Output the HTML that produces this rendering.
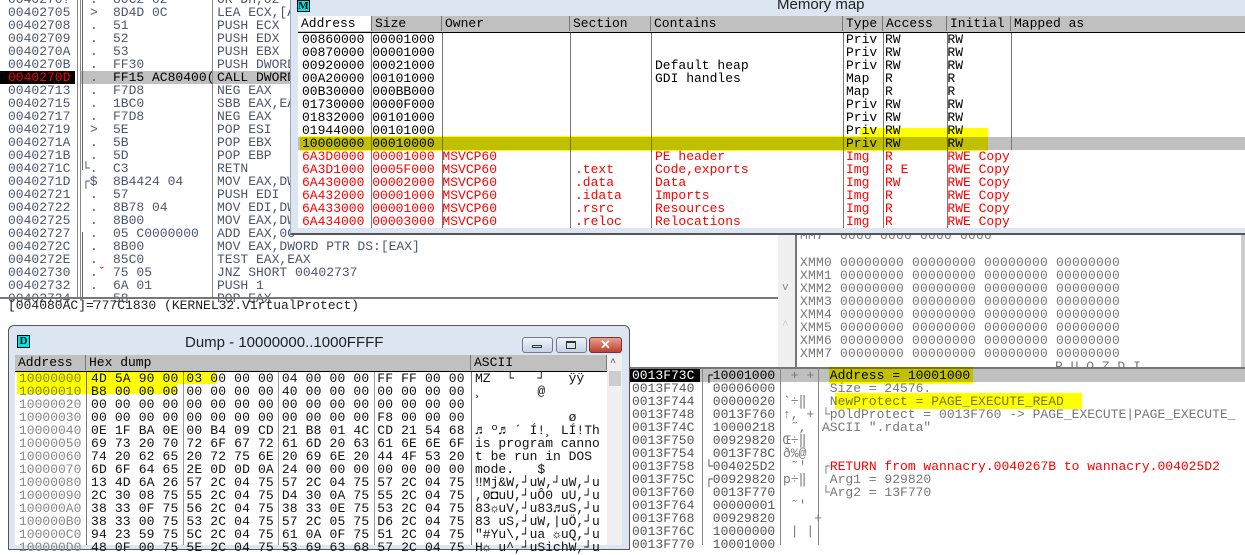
<!DOCTYPE html>
<html><head><meta charset="utf-8"><style>
*{margin:0;padding:0;box-sizing:border-box}
body{width:1245px;height:545px;overflow:hidden;background:#fff;position:relative;font-family:"Liberation Mono","DejaVu Sans Mono",monospace;font-size:13px;line-height:13px}
.a{position:absolute;white-space:pre}
.l{position:absolute;background:#555}
.dis{color:#4a5670}
.red{color:#f00}
.hl{position:absolute;background:#ffff00;mix-blend-mode:multiply}
.title{font-family:"Liberation Sans",sans-serif;font-size:15px;color:#222}
.hdr{position:absolute;background:#c0c0c0;border-bottom:1px solid #000}
.hc{position:absolute;top:0;height:15px;line-height:15px;padding-left:3px;border-right:1px solid #777;color:#000;white-space:pre}
</style></head><body>

<div class="a" style="left:80px;top:71px;width:215px;height:13px;background:#c0c0c0"></div>
<div class="a dis" style="left:8px;top:-7px;line-height:13px">0040270?
00402705
00402708
00402709
0040270A
0040270B
<span style="background:#000;color:#f00;display:inline-block;margin-left:-8px;padding-left:8px;width:75px">0040270D</span>
00402713
00402715
00402717
00402719
0040271A
0040271B
0040271C
0040271D
00402721
00402722
00402725
00402727
0040272C
0040272E
00402730
00402732
00402734</div>
<div class="l" style="left:77px;top:0;width:1px;height:297px;background:#888"></div>
<div class="l" style="left:80px;top:0;width:1px;height:297px;background:#888"></div>
<div class="l" style="left:212px;top:0;width:1px;height:297px;background:#888"></div>
<div class="l" style="left:82px;top:0;width:1px;height:170px;background:#666"></div>
<div class="l" style="left:82px;top:232px;width:1px;height:65px;background:#666"></div>
<div class="a dis" style="left:90px;top:-7px">.
&gt;
.
.
.
.
.
.
.
.
&gt;
.
.
<span style="margin-left:-8px">└.</span>
<span style="margin-left:-8px">┌$</span>
.
.
.
.
.
.
.<span class="red">ˇ</span>
.
.</div>
<div class="a dis" style="left:113px;top:-7px">80C2 02
8D4D 0C
51
52
53
FF30
<span style="color:#000">FF15 AC80400(</span>
F7D8
1BC0
F7D8
5E
5B
5D
C3
8B4424 04
57
8B78 04
8B00
05 C0000000
8B00
85C0
75 05
6A 01
58</div>
<div class="a dis" style="left:217px;top:-7px">OR DH,02
LEA ECX,[A
PUSH ECX
PUSH EDX
PUSH EBX
PUSH DWORD
<span style="color:#000">CALL DWORD</span>
NEG EAX
SBB EAX,EA
NEG EAX
POP ESI
POP EBX
POP EBP
RETN
MOV EAX,DW
PUSH EDI
MOV EDI,DW
MOV EAX,DW
ADD EAX,0C
MOV EAX,DWORD PTR DS:[EAX]
TEST EAX,EAX
JNZ SHORT 00402737
PUSH 1
POP EAX</div>
<div class="l" style="left:0;top:297px;width:795px;height:2px;background:#777"></div>
<div class="a" style="left:8px;top:299px;color:#222">[004080AC]=777C1830 (KERNEL32.VirtualProtect)</div>
<div class="l" style="left:778px;top:235px;width:17px;height:133px;background:#f0f0f0"></div>
<div class="a" style="left:782px;top:282px;color:#888;font-size:11px">v</div>
<div class="a" style="left:782px;top:320px;color:#ccc;font-size:11px">^</div>

<div class="l" style="left:795px;top:235px;width:2px;height:133px;background:#777"></div>
<div class="a" style="left:800px;top:229px;color:#777;letter-spacing:0.2px">MM7  0000 0000 0000 0000</div>
<div class="a" style="left:800px;top:256px;color:#777;letter-spacing:0.2px">XMM0 00000000 00000000 00000000 00000000
XMM1 00000000 00000000 00000000 00000000
XMM2 00000000 00000000 00000000 00000000
XMM3 00000000 00000000 00000000 00000000
XMM4 00000000 00000000 00000000 00000000
XMM5 00000000 00000000 00000000 00000000
XMM6 00000000 00000000 00000000 00000000
XMM7 00000000 00000000 00000000 00000000</div>
<div class="a" style="left:1055px;top:360px;color:#777">P U O Z D I</div>
<div class="l" style="left:1241px;top:235px;width:4px;height:133px;background:#ccc"></div>

<div class="l" style="left:630px;top:367px;width:615px;height:2px;background:#777"></div>
<div class="a" style="left:630px;top:369px;width:615px;height:13px;background:#c0c0c0"></div>
<div class="a" style="left:630px;top:369px;width:70px;height:13px;background:#000"></div>
<div class="l" style="left:702px;top:369px;width:1px;height:176px;background:#888"></div>
<div class="l" style="left:780px;top:369px;width:1px;height:176px;background:#888"></div>
<div class="l" style="left:818px;top:369px;width:1px;height:176px;background:#888"></div>
<div class="a" style="left:632px;top:369px;color:#555"><span style="color:#fff">0013F73C</span>
0013F740
0013F744
0013F748
0013F74C
0013F750
0013F754
0013F758
0013F75C
0013F760
0013F764
0013F768
0013F76C
0013F770</div>
<div class="a" style="left:705px;top:369px;color:#555"><span style="color:#000">┌10001000</span>
 00006000
 00000020
 0013F760
 10000218
 00929820
 0013F78C
└004025D2
┌00929820
 0013F770
 00000001
 00929820
 10000000
 10001000</div>
<div class="a" style="left:783px;top:369px;color:#777"> + +
 
`÷‖
↑, +
 ˜,
Œ÷‖
ð%@
 ˜'
p÷‖
 
 ˜'
    +
 | |</div>
<div class="a" style="left:822px;top:369px;color:#777"><span style="color:#000"> Address = 10001000</span>
 Size = 24576.
 NewProtect = PAGE_EXECUTE_READ
└pOldProtect = 0013F760 -> PAGE_EXECUTE|PAGE_EXECUTE_
ASCII ".rdata"
 
 
┌<span class="red">RETURN from wannacry.0040267B to wannacry.004025D2</span>
 Arg1 = 929820
└Arg2 = 13F770</div>
<div class="hl" style="left:829px;top:367px;width:144px;height:17px"></div>
<div class="hl" style="left:835px;top:393px;width:247px;height:16px"></div>

<div class="a" style="left:290px;top:0;width:955px;height:235px;background:#dbe6f2;border-left:1px solid #9aa;border-bottom:2px solid #555"></div>
<div class="a" style="left:297px;top:0;width:13px;height:12px;background:#00e5e5;border:1px solid #000;font-family:'Liberation Serif',serif;font-size:11px;line-height:10px;text-align:center;font-weight:bold">M</div>
<div class="a title" style="left:777px;top:-2px">Memory map</div>
<div class="a" style="left:298px;top:16px;width:947px;height:212px;background:#fff"></div>
<div class="hdr" style="left:298px;top:16px;width:947px;height:17px">
<div class="hc" style="left:0;width:74px;background:#fff">Address</div>
<div class="hc" style="left:74px;width:70px">Size</div>
<div class="hc" style="left:144px;width:128px">Owner</div>
<div class="hc" style="left:272px;width:81px">Section</div>
<div class="hc" style="left:353px;width:192px">Contains</div>
<div class="hc" style="left:545px;width:40px">Type</div>
<div class="hc" style="left:585px;width:64px">Access</div>
<div class="hc" style="left:649px;width:64px">Initial</div>
<div class="hc" style="left:713px;width:234px;border:none">Mapped as</div>
</div>
<div class="a" style="left:298px;top:137px;width:947px;height:13px;background:#c0c0c0"></div>
<div class="l" style="left:371px;top:33px;width:1px;height:195px;background:#777"></div>
<div class="l" style="left:442px;top:33px;width:1px;height:195px;background:#777"></div>
<div class="l" style="left:570px;top:33px;width:1px;height:195px;background:#777"></div>
<div class="l" style="left:651px;top:33px;width:1px;height:195px;background:#777"></div>
<div class="l" style="left:843px;top:33px;width:1px;height:195px;background:#777"></div>
<div class="l" style="left:883px;top:33px;width:1px;height:195px;background:#777"></div>
<div class="l" style="left:947px;top:33px;width:1px;height:195px;background:#777"></div>
<div class="l" style="left:1011px;top:33px;width:1px;height:195px;background:#777"></div>
<div class="a" style="left:302px;top:33px;color:#000">00860000 00001000
00870000 00001000
00920000 00021000
00A20000 00101000
00B30000 000BB000
01730000 0000F000
01832000 00101000
01944000 00101000
10000000 00010000
<span class="red">6A3D0000 00001000 MSVCP60
6A3D1000 0005F000 MSVCP60
6A430000 00002000 MSVCP60
6A432000 00001000 MSVCP60
6A433000 00001000 MSVCP60
6A434000 00003000 MSVCP60</span></div>
<div class="a red" style="left:575px;top:33px"> 
 
 
 
 
 
 
 
 
 
.text
.data
.idata
.rsrc
.reloc</div>
<div class="a" style="left:655px;top:33px"> 
 
Default heap
GDI handles
 
 
 
 
 
<span class="red">PE header
Code,exports
Data
Imports
Resources
Relocations</span></div>
<div class="a" style="left:846px;top:33px">Priv RW      RW
Priv RW      RW
Priv RW      RW
Map  R       R
Map  R       R
Priv RW      RW
Priv RW      RW
Priv RW      RW
Priv RW      RW
<span class="red">Img  R       RWE Copy
Img  R E     RWE Copy
Img  RW      RWE Copy
Img  R       RWE Copy
Img  R       RWE Copy
Img  R       RWE Copy</span></div>
<div class="a" style="left:1011px;top:150px;width:234px;height:78px;background:#fff"></div>
<div class="hl" style="left:300px;top:136px;width:688px;height:15px"></div>
<div class="hl" style="left:860px;top:128px;width:128px;height:9px"></div>

<div class="a" style="left:8px;top:325px;width:622px;height:225px;background:#dbe6f2;border:1px solid #555;border-radius:6px 6px 0 0"></div>
<div class="a" style="left:17px;top:335px;width:13px;height:13px;background:#00e5e5;border:1px solid #000;font-family:'Liberation Serif',serif;font-size:11px;line-height:11px;text-align:center;font-weight:bold">D</div>
<div class="a title" style="left:185px;top:336px">Dump - 10000000..1000FFFF</div>
<div class="a" style="left:522px;top:337px;width:31px;height:16px;background:linear-gradient(#eef3f9,#c5d3e5);border:1px solid #778;border-radius:3px"></div>
<div class="a" style="left:532px;top:345px;width:10px;height:3px;border:1px solid #333"></div>
<div class="a" style="left:556px;top:337px;width:31px;height:16px;background:linear-gradient(#eef3f9,#c5d3e5);border:1px solid #778;border-radius:3px"></div>
<div class="a" style="left:566px;top:341px;width:10px;height:8px;border:1px solid #333;border-top-width:2px"></div>
<div class="a" style="left:589px;top:337px;width:33px;height:16px;background:linear-gradient(#e8a090,#c0402c);border:1px solid #733;border-radius:3px;color:#fff;font-family:'Liberation Sans';font-weight:bold;font-size:13px;line-height:14px;text-align:center">✕</div>
<div class="a" style="left:15px;top:355px;width:607px;height:190px;background:#fff"></div>
<div class="hdr" style="left:15px;top:355px;width:592px;height:17px">
<div class="hc" style="left:0;width:71px">Address</div>
<div class="hc" style="left:71px;width:385px">Hex dump</div>
<div class="hc" style="left:456px;width:136px">ASCII</div>
</div>
<div class="a" style="left:607px;top:355px;width:15px;height:190px;background:#f0f0f0"></div>
<div class="a" style="left:609px;top:371px;width:12px;height:15px;background:#cdcdcd"></div>
<div class="a" style="left:610px;top:357px;font-size:10px;color:#444">^</div>
<div class="l" style="left:86px;top:372px;width:1px;height:173px;background:#777"></div>
<div class="l" style="left:183px;top:372px;width:1px;height:173px;background:#999"></div>
<div class="l" style="left:278px;top:372px;width:1px;height:173px;background:#999"></div>
<div class="l" style="left:374px;top:372px;width:1px;height:173px;background:#999"></div>
<div class="l" style="left:471px;top:372px;width:1px;height:173px;background:#777"></div>
<div class="a" style="left:19px;top:372px;color:#888">10000000
10000010
10000020
10000030
10000040
10000050
10000060
10000070
10000080
10000090
100000A0
100000B0
100000C0
100000D0</div>
<div class="a" style="left:91px;top:372px;color:#111;letter-spacing:0.15px">4D 5A 90 00 03 00 00 00 04 00 00 00 FF FF 00 00
B8 00 00 00 00 00 00 00 40 00 00 00 00 00 00 00
00 00 00 00 00 00 00 00 00 00 00 00 00 00 00 00
00 00 00 00 00 00 00 00 00 00 00 00 F8 00 00 00
0E 1F BA 0E 00 B4 09 CD 21 B8 01 4C CD 21 54 68
69 73 20 70 72 6F 67 72 61 6D 20 63 61 6E 6E 6F
74 20 62 65 20 72 75 6E 20 69 6E 20 44 4F 53 20
6D 6F 64 65 2E 0D 0D 0A 24 00 00 00 00 00 00 00
13 4D 6A 26 57 2C 04 75 57 2C 04 75 57 2C 04 75
2C 30 08 75 55 2C 04 75 D4 30 0A 75 55 2C 04 75
38 33 0F 75 56 2C 04 75 38 33 0E 75 53 2C 04 75
38 33 00 75 53 2C 04 75 57 2C 05 75 D6 2C 04 75
94 23 59 75 5C 2C 04 75 61 0A 0F 75 51 2C 04 75
48 0F 00 75 5E 2C 04 75 53 69 63 68 57 2C 04 75</div>
<div class="a" style="left:475px;top:372px;color:#111">MZ  └   ┘   ÿÿ
¸       @
 
            ø
♬ º♬ ´ Í!¸ LÍ!Th
is program canno
t be run in DOS
mode.   $
‼Mj&amp;W,┘uW,┘uW,┘u
,0◘uU,┘uÔ0 uU,┘u
83☼uV,┘u83♬uS,┘u
83 uS,┘uW,|uÖ,┘u
"#Yu\,┘ua ☼uQ,┘u
H☼ u^,┘uSichW,┘u</div>
<div class="hl" style="left:17px;top:371px;width:200px;height:13px"></div>
<div class="hl" style="left:17px;top:384px;width:160px;height:10px"></div>

</body></html>
